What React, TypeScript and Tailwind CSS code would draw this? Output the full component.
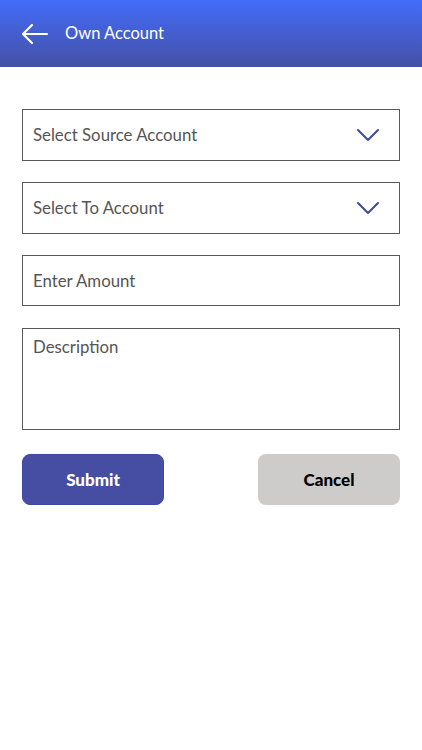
import React from 'react';

const font = { fontFamily: 'Lato, "Noto Sans", sans-serif' };

function Chevron() {
  return (
    <svg width="24" height="14" viewBox="0 0 24 14" fill="none" stroke="#3c4a9c" strokeWidth="2" strokeLinecap="round" strokeLinejoin="round">
      <path d="M2 2l10 10L22 2" />
    </svg>
  );
}

function SelectBox({ label }: { label: string }) {
  return (
    <div className="flex h-[52px] items-center justify-between border border-[#5a5a5a] pl-[10px] pr-[19px]">
      <span className="text-[16.8px] text-[#555]">{label}</span>
      <Chevron />
    </div>
  );
}

export default function App() {
  return (
    <div className="min-h-[750px] bg-white" style={font}>
      {/* Header */}
      <div className="flex h-[67px] items-center bg-gradient-to-b from-[#426cfa] to-[#4450a6] pl-[21px]">
        <svg width="28" height="22" viewBox="0 0 28 22" fill="none" stroke="white" strokeWidth="2.2" strokeLinecap="round" strokeLinejoin="round">
          <path d="M26 11H2M11 2L2 11l9 9" />
        </svg>
        <span className="ml-[16px] text-[16.5px] text-white">Own Account</span>
      </div>

      <div className="flex flex-col px-[22px] pt-[42px]">
        <SelectBox label="Select Source Account" />
        <div className="mt-[21px]">
          <SelectBox label="Select To Account" />
        </div>
        <div className="mt-[21px] flex h-[51px] items-center border border-[#5a5a5a] pl-[10px]">
          <span className="text-[16.8px] text-[#555]">Enter Amount</span>
        </div>
        <div className="mt-[22px] h-[102px] border border-[#5a5a5a] pl-[10px] pt-[5px]">
          <span className="text-[16.8px] text-[#555]">Description</span>
        </div>
        <div className="mt-[24px] flex justify-between">
          <button className="h-[51px] w-[142px] rounded-[8px] border border-[#3a49a8] bg-[#454ea3] text-[17px] font-black text-white">
            Submit
          </button>
          <button className="h-[51px] w-[142px] rounded-[8px] bg-[#cdcccb] text-[17px] font-black text-black">
            Cancel
          </button>
        </div>
      </div>
    </div>
  );
}
